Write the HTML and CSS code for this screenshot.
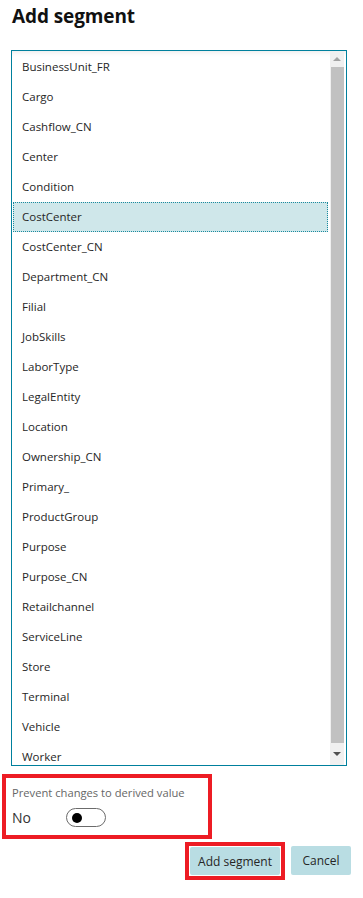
FILE: index.html
```html
<!DOCTYPE html>
<html lang="en">
<head>
  <meta charset="UTF-8" />
  <title>Add segment</title>
  <link rel="stylesheet" href="styles.css">
</head>
<body>
  <div class="dialog">
    <h1 class="dialog-title">Add segment</h1>

    <!-- Segment lookup -->
    <div class="lookup">
      <ul class="lookup-items">
        <li>BusinessUnit_FR</li>
        <li>Cargo</li>
        <li>Cashflow_CN</li>
        <li>Center</li>
        <li>Condition</li>
        <li class="selected">CostCenter</li>
        <li>CostCenter_CN</li>
        <li>Department_CN</li>
        <li>Filial</li>
        <li>JobSkills</li>
        <li>LaborType</li>
        <li>LegalEntity</li>
        <li>Location</li>
        <li>Ownership_CN</li>
        <li>Primary_</li>
        <li>ProductGroup</li>
        <li>Purpose</li>
        <li>Purpose_CN</li>
        <li>Retailchannel</li>
        <li>ServiceLine</li>
        <li>Store</li>
        <li>Terminal</li>
        <li>Vehicle</li>
        <li>Worker</li>
      </ul>
      <div class="scrollbar">
        <div class="scroll-btn"><span class="arrow-up"></span></div>
        <div class="scroll-thumb"></div>
        <div class="scroll-btn scroll-btn-down"><span class="arrow-down"></span></div>
      </div>
    </div>

    <!-- Prevent changes toggle -->
    <div class="prevent highlight">
      <div class="field-label">Prevent changes to derived value</div>
      <div class="toggle-row">
        <span class="toggle-value">No</span>
        <span class="toggle"><span class="toggle-knob"></span></span>
      </div>
    </div>

    <div class="actions">
      <div class="highlight add-wrap">
        <button class="btn">Add segment</button>
      </div>
      <button class="btn btn-cancel">Cancel</button>
    </div>
  </div>
</body>
</html>
```

FILE: styles.css
```css
body {
  margin: 0;
  background: #fff;
  font-family: 'Open Sans', 'Noto Sans', sans-serif;
  color: #212121;
}
.dialog {
  width: 363px;
}
.dialog-title {
  margin: 0;
  padding: 3px 0 0 12px;
  height: 50px;
  box-sizing: border-box;
  font-size: 19px;
  font-weight: 700;
  color: #111;
  letter-spacing: -0.1px;
}
.lookup {
  margin-left: 11px;
  width: 336px;
  height: 716px;
  box-sizing: border-box;
  border: 1px solid #00809d;
  display: flex;
  overflow: hidden;
  box-shadow: inset 0 6px 6px -6px rgba(0, 0, 0, 0.12);
}
.lookup-items {
  list-style: none;
  margin: 0;
  padding: 1px 0 0 0;
  flex: 1;
  overflow: hidden;
}
.lookup-items li {
  height: 30px;
  line-height: 30px;
  padding-left: 10px;
  font-size: 11.5px;
  color: #262626;
  white-space: nowrap;
}
.lookup-items li.selected {
  margin: 0 2px 0 1px;
  padding-left: 8px;
  height: 28px;
  line-height: 28px;
  background: #cfe7ea;
  border: 1px dotted #1b8a9e;
}
.scrollbar {
  width: 14px;
  margin-right: 2px;
  background: #f0f0f0;
  display: flex;
  flex-direction: column;
}
.scroll-btn {
  height: 16px;
  display: flex;
  align-items: center;
  justify-content: center;
}
.scroll-btn-down {
  height: 22px;
}
.scroll-thumb {
  flex: 1;
  margin-left: 1px;
  background: #c1c1c1;
}
.arrow-up,
.arrow-down {
  width: 0;
  height: 0;
  border-left: 4px solid transparent;
  border-right: 4px solid transparent;
}
.arrow-up {
  border-bottom: 4px solid #a3a3a3;
}
.arrow-down {
  border-top: 4px solid #505050;
}

/* red annotation boxes */
.highlight {
  border: 4px solid #ed1c24;
  box-sizing: border-box;
}
.prevent {
  margin: 8px 0 0 2px;
  width: 210px;
  height: 65px;
  padding: 7px 0 0 6px;
}
.field-label {
  font-size: 11.2px;
  color: #666;
  line-height: 16px;
}
.toggle-row {
  display: flex;
  align-items: center;
  margin-top: 7px;
}
.toggle-value {
  width: 54px;
  font-size: 14px;
  color: #333;
}
.toggle {
  width: 40px;
  height: 19px;
  box-sizing: border-box;
  border: 1px solid #6b6b6b;
  border-radius: 10px;
  display: flex;
  align-items: center;
  padding-left: 5px;
}
.toggle-knob {
  width: 10px;
  height: 10px;
  border-radius: 50%;
  background: #000;
}
.actions {
  display: flex;
  justify-content: flex-end;
  align-items: center;
  gap: 6px;
  margin-top: 3px;
  padding-right: 12px;
}
.add-wrap {
  padding: 1px;
}
.btn {
  display: block;
  height: 28px;
  border: none;
  border-radius: 2px;
  background: #b9dde3;
  font-family: inherit;
  font-size: 12px;
  color: #262626;
  width: 90px;
  padding: 0;
}
.btn-cancel {
  width: 60px;
  height: 29px;
  margin-top: -2px;
}
```
